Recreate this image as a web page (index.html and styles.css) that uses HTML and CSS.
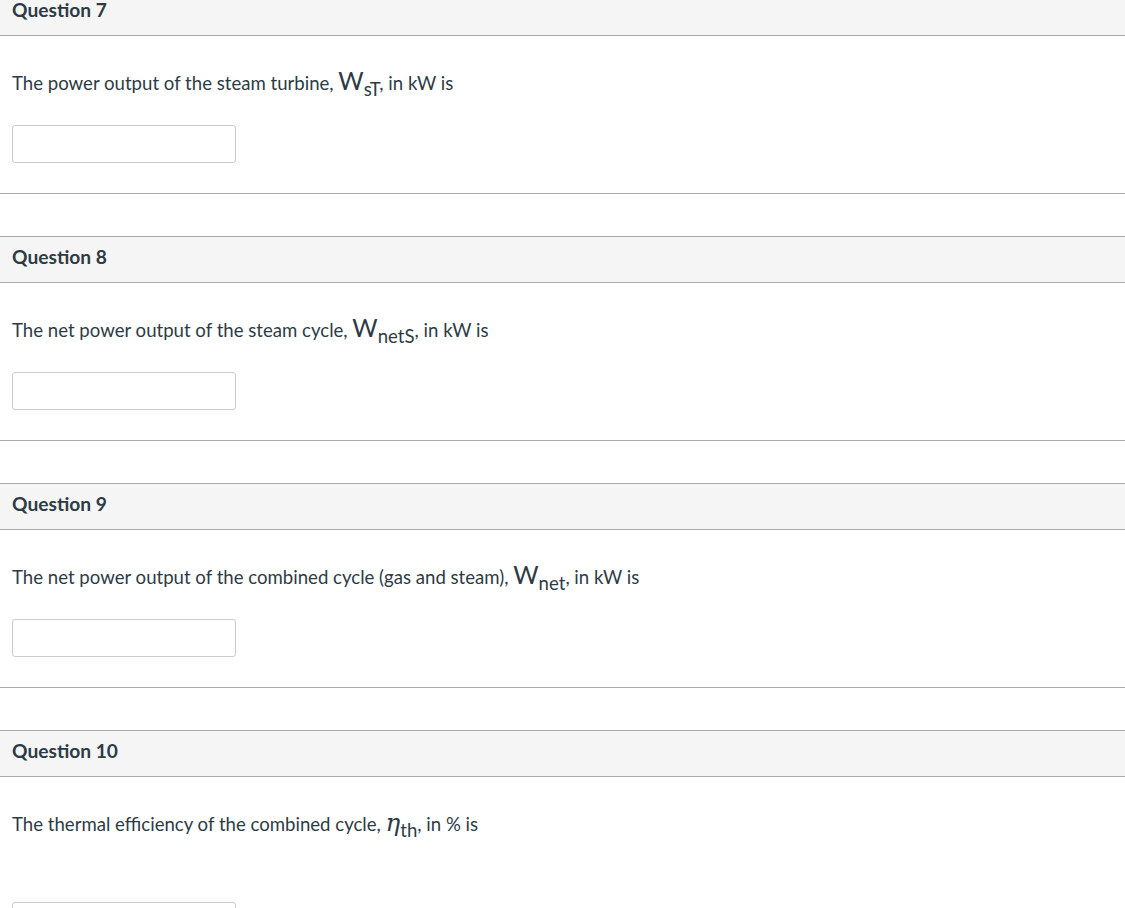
FILE: index.html
```html
<!DOCTYPE html>
<html lang="en">
<head>
<meta charset="utf-8">
<title>Quiz questions</title>
<link rel="stylesheet" href="styles.css">
</head>
<body>
<div class="page">
  <div class="question">
    <div class="q-header">Question 7</div>
    <div class="q-body">
      <div class="q-text">The power output of the steam turbine, <span class="big">W</span><span class="sub">sT</span>, in kW is</div>
      <div class="q-answer"><input class="answer" type="text" aria-label="Answer"></div>
    </div>
  </div>
  <div class="question">
    <div class="q-header">Question 8</div>
    <div class="q-body">
      <div class="q-text">The net power output of the steam cycle, <span class="big">W</span><span class="sub">netS</span>, in kW is</div>
      <div class="q-answer"><input class="answer" type="text" aria-label="Answer"></div>
    </div>
  </div>
  <div class="question">
    <div class="q-header">Question 9</div>
    <div class="q-body">
      <div class="q-text">The net power output of the combined cycle (gas and steam), <span class="big">W</span><span class="sub">net</span>, in kW is</div>
      <div class="q-answer"><input class="answer" type="text" aria-label="Answer"></div>
    </div>
  </div>
  <div class="question">
    <div class="q-header">Question 10</div>
    <div class="q-body">
      <div class="q-text q-text-tall">The thermal efficiency of the combined cycle, <span class="eta">η</span><span class="sub">th</span>, in % is</div>
      <div class="q-answer"><input class="answer" type="text" aria-label="Answer"></div>
    </div>
  </div>
</div>
</body>
</html>
```
FILE: styles.css
```css
html, body {
  margin: 0;
  padding: 0;
  background: #ffffff;
}

body {
  font-family: Lato, "Liberation Sans", sans-serif;
  color: #2d3b45;
  font-size: 18.6px;
}

.page {
  margin-top: -11px;
}

.question {
  border-top: 1px solid #aaaaaa;
  border-bottom: 1px solid #aaaaaa;
  margin-bottom: 42px;
}

.q-header {
  background: #f5f5f5;
  border-bottom: 1px solid #aaaaaa;
  height: 46px;
  box-sizing: border-box;
  padding: 8px 12px 13px;
  font-size: 19.2px;
  line-height: 24px;
  font-weight: 700;
}

.q-body {
  padding: 35px 12px 30px;
}

.q-text {
  line-height: 24px;
  font-size: 18.6px;
  white-space: nowrap;
}

.q-text-tall {
  padding-bottom: 36px;
}

.big {
  font-size: 24.5px;
  line-height: 0;
}

.eta {
  font-family: "DejaVu Serif", "Liberation Serif", serif;
  font-style: italic;
  font-size: 24.5px;
  line-height: 0;
}

.sub {
  font-size: 18.6px;
  line-height: 0;
  position: relative;
  top: 6px;
}

.q-answer {
  margin-top: 30px;
  display: flex;
}

.answer {
  width: 224px;
  height: 38px;
  box-sizing: border-box;
  border: 1px solid #cccccc;
  border-radius: 3px;
  background: #ffffff;
  margin: 0;
  padding: 0 8px;
  font-family: inherit;
  font-size: 16px;
}
```
